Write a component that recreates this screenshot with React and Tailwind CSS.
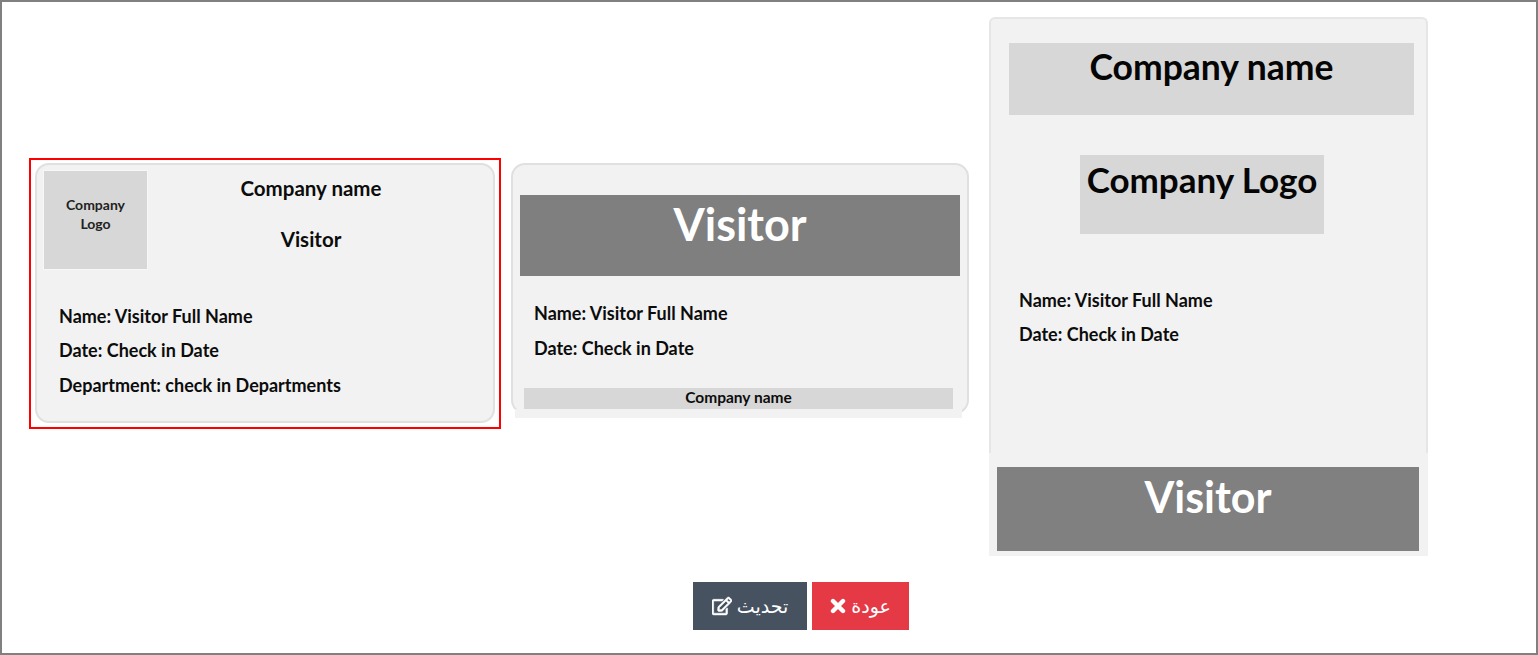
import React from "react";
import { FaRegEdit } from "react-icons/fa";

function Line({ children, className = "" }) {
  return <p className={`text-[18px] leading-[20px] font-bold text-[#0c0c0c] ${className}`}>{children}</p>;
}

function App() {
  return (
    <div className="h-[655px] border-2 border-[#808080] bg-white overflow-hidden font-['Lato','Liberation_Sans',sans-serif]">
      <div className="flex items-start pl-[27px] pt-[15px]">
        {/* Card 1 - selected */}
        <div className="mt-[141px] w-[472px] h-[271px] border-2 border-[#ff0000] px-[4px] pt-[3px]">
          <div className="w-[460px] h-[260px] bg-[#f2f2f2] border-2 border-[#e0e0e0] rounded-[14px] px-[6px] pt-[5px]">
            <div className="flex">
              <div className="w-[105px] h-[100px] bg-[#d7d7d7] border border-[#f7f7f7] pt-[24px] text-center text-[14px] leading-[19px] font-bold text-[#222]">
                Company
                <br />
                Logo
              </div>
              <div className="w-[326px] text-center text-[#0c0c0c] font-bold text-[20.5px] leading-[22px] pt-[7px]">
                <p>Company name</p>
                <p className="mt-[29px]">Visitor</p>
              </div>
            </div>
            <div className="pl-[16px] pt-[36px]">
              <Line>Name: Visitor Full Name</Line>
              <Line className="mt-[14px]">Date: Check in Date</Line>
              <Line className="mt-[15px]">Department: check in Departments</Line>
            </div>
          </div>
        </div>

        {/* Card 2 */}
        <div className="relative ml-[10px] mt-[146px] w-[458px] h-[251px] bg-[#f2f2f2] border-2 border-[#e0e0e0] rounded-[14px] pt-[30px] px-[7px]">
          <div className="h-[81px] bg-[#7f7f7f] text-center text-white font-bold text-[45px] leading-[58px]">Visitor</div>
          <div className="pl-[14px] pt-[27px]">
            <Line>Name: Visitor Full Name</Line>
            <Line className="mt-[15px]">Date: Check in Date</Line>
          </div>
          <div className="mt-[30px] mx-[4px] w-[429px] h-[21px] bg-[#d7d7d7] text-center text-[#0c0c0c] font-bold text-[15.5px] leading-[19px]">
            Company name
          </div>
          <div className="absolute left-[2px] right-[5px] top-[244px] h-[9px] bg-[#f2f2f2]" />
        </div>

        {/* Card 3 */}
        <div className="ml-[20px] w-[439px]">
          <div className="h-[436px] bg-[#f2f2f2] border-2 border-b-0 border-[#e6e6e6] rounded-t-[6px] pt-[24px]">
            <div className="ml-[18px] w-[405px] h-[72px] bg-[#d7d7d7] text-center text-[#050505] font-bold text-[35.5px] leading-[48px]">
              Company name
            </div>
            <div className="ml-[89px] mt-[40px] w-[244px] h-[79px] bg-[#d7d7d7] text-center text-[#050505] font-bold text-[35px] leading-[48px]">
              Company Logo
            </div>
            <div className="pl-[28px] pt-[56px]">
              <Line>Name: Visitor Full Name</Line>
              <Line className="mt-[14px]">Date: Check in Date</Line>
            </div>
          </div>
          <div className="h-[103px] bg-[#f2f2f2] pl-[8px] pt-[14px]">
            <div className="w-[422px] h-[84px] bg-[#808080] text-center text-white font-bold text-[43px] leading-[60px]">
              Visitor
            </div>
          </div>
        </div>
      </div>

      {/* Buttons */}
      <div dir="rtl" className="flex justify-center gap-[5px] pl-[64px] mt-[26px]">
        <button className="w-[97px] h-[48px] bg-[#e63946] text-white text-[19px] flex items-center justify-center gap-[5px] font-['DejaVu_Sans',sans-serif]">
          <span>عودة</span>
          <svg width="16" height="16" viewBox="0 0 16 16" aria-hidden="true">
            <path d="M3 3L13 13M13 3L3 13" stroke="currentColor" strokeWidth="4.4" strokeLinecap="round" />
          </svg>
        </button>
        <button className="w-[114px] h-[48px] bg-[#475260] text-white text-[19px] flex items-center justify-center gap-[5px] font-['DejaVu_Sans',sans-serif]">
          <span>تحديث</span>
          <FaRegEdit size={20} stroke="currentColor" strokeWidth={16} />
        </button>
      </div>
    </div>
  );
}

export default App;
